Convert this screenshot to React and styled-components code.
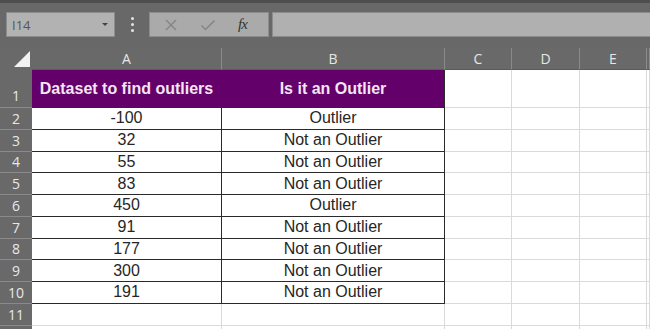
import React from 'react';
import styled, { createGlobalStyle } from 'styled-components';

const GlobalStyle = createGlobalStyle`
	html, body {
		margin: 0;
		padding: 0;
		background: #ffffff;
		overflow: hidden;
	}
`;

const Window = styled.div`
	width: 650px;
	height: 329px;
	overflow: hidden;
	background: #686868;
	display: flex;
	flex-direction: column;
	font-family: 'Liberation Sans', Arial, sans-serif;
`;

const TopStrip = styled.div`
	height: 3px;
	flex-shrink: 0;
	background: #4e4e4e;
`;

const FormulaBar = styled.div`
	height: 45px;
	flex-shrink: 0;
	box-sizing: border-box;
	padding: 9px 0 0 6px;
	display: flex;
	align-items: flex-start;
	background: #686868;
`;

const NameBox = styled.div`
	width: 109px;
	height: 25px;
	box-sizing: border-box;
	background: #b2b2b2;
	border: 1px solid #8c8c8c;
	display: flex;
	align-items: center;
	justify-content: space-between;
	padding: 0 6px 0 5px;
	font-family: 'Open Sans', sans-serif;
	font-size: 13px;
	color: #555;
`;

const Caret = styled.span`
	width: 0;
	height: 0;
	border-left: 3px solid transparent;
	border-right: 3px solid transparent;
	border-top: 3px solid #444;
`;

const Dots = styled.div`
	width: 34px;
	height: 25px;
	display: flex;
	flex-direction: column;
	align-items: center;
	justify-content: center;
	gap: 3px;
	& > span {
		width: 3px;
		height: 3px;
		border-radius: 50%;
		background: #e4e4e4;
	}
`;

const ButtonGroup = styled.div`
	width: 120px;
	height: 25px;
	box-sizing: border-box;
	background: #aaaaaa;
	border: 1px solid #8c8c8c;
	display: flex;
	align-items: center;
	padding-left: 14px;
	gap: 22px;
`;

const Fx = styled.span`
	font-family: 'Liberation Serif', 'DejaVu Serif', serif;
	font-style: italic;
	font-size: 15px;
	color: #333;
	letter-spacing: -1px;
`;

const FormulaInput = styled.div`
	flex: 1;
	margin-left: 3px;
	height: 25px;
	box-sizing: border-box;
	background: #b0b0b0;
	border: 1px solid #8c8c8c;
	border-right: none;
`;

const Sheet = styled.div`
	flex-shrink: 0;
	display: grid;
	grid-template-columns: 32px 190px 223px 67px 68px 67px 1fr;
	grid-template-rows: 22px 38px repeat(11, 21.75px);
	background: #ffffff;
`;

const ColHead = styled.div`
	background: #696969;
	color: #e6e6e6;
	font-family: 'Open Sans', sans-serif;
	font-size: 14px;
	display: flex;
	align-items: center;
	justify-content: center;
	box-sizing: border-box;
	border-right: 1px solid #8a8a8a;
	border-bottom: 1px solid #5a5a5a;
`;

const Corner = styled.div`
	background: #696969;
	display: flex;
	align-items: flex-end;
	justify-content: flex-end;
	padding: 0 2px 3px 0;
	box-sizing: border-box;
	& > span {
		width: 0;
		height: 0;
		border-left: 16px solid transparent;
		border-bottom: 16px solid #f2f2f2;
	}
`;

const RowHead = styled.div`
	background: #696969;
	color: #e8e8e8;
	font-family: 'Open Sans', sans-serif;
	font-size: 14px;
	display: flex;
	align-items: ${(p) => (p.tall ? 'flex-end' : 'center')};
	padding-bottom: ${(p) => (p.tall ? '2px' : '0')};
	justify-content: center;
	box-sizing: border-box;
	border-bottom: 1px solid #8a8a8a;
`;

const Cell = styled.div`
	box-sizing: border-box;
	display: flex;
	align-items: center;
	justify-content: center;
	font-size: 16px;
	color: #262626;
	white-space: nowrap;
	border-right: 1px solid ${(p) => (p.boxed ? '#2a2a2a' : '#dadada')};
	border-bottom: 1px solid ${(p) => (p.boxed ? '#2a2a2a' : '#dadada')};
	background: ${(p) => (p.head ? '#64006a' : '#ffffff')};
	${(p) => p.head && 'color: #f4e6f4; font-weight: bold;'}
`;

// F is only a sliver at the right edge, so its letter is off-screen
const columns = ['A', 'B', 'C', 'D', 'E', ''];

const data = [
	[-100, 'Outlier'],
	[32, 'Not an Outlier'],
	[55, 'Not an Outlier'],
	[83, 'Not an Outlier'],
	[450, 'Outlier'],
	[91, 'Not an Outlier'],
	[177, 'Not an Outlier'],
	[300, 'Not an Outlier'],
	[191, 'Not an Outlier'],
];

function Blanks({ row }) {
	return [0, 1, 2, 3].map((i) => <Cell key={`${row}-b${i}`} />);
}

export default function App() {
	return (
		<>
			<GlobalStyle />
			<Window>
				<TopStrip />
				<FormulaBar>
					<NameBox>
						<span>I14</span>
						<Caret />
					</NameBox>
					<Dots>
						<span />
						<span />
						<span />
					</Dots>
					<ButtonGroup>
						<svg width="14" height="14" viewBox="0 0 14 14">
							<path d="M2 2 L12 12 M12 2 L2 12" stroke="#858585" strokeWidth="1.4" />
						</svg>
						<svg width="16" height="14" viewBox="0 0 16 14">
							<path d="M1.5 7.5 L5.5 11.5 L14.5 2.5" stroke="#858585" strokeWidth="1.5" fill="none" />
						</svg>
						<Fx>fx</Fx>
					</ButtonGroup>
					<FormulaInput />
				</FormulaBar>
				<Sheet>
					<Corner>
						<span />
					</Corner>
					{columns.map((c, i) => (
						<ColHead key={`col${i}`}>{c}</ColHead>
					))}

					<RowHead tall>1</RowHead>
					<Cell head boxed>Dataset to find outliers</Cell>
					<Cell head boxed>Is it an Outlier</Cell>
					<Blanks row={1} />

					{data.map(([value, label], index) => (
						<React.Fragment key={`${value}${index}`}>
							<RowHead>{index + 2}</RowHead>
							<Cell boxed>{value}</Cell>
							<Cell boxed>{label}</Cell>
							<Blanks row={index + 2} />
						</React.Fragment>
					))}

					<RowHead>11</RowHead>
					<Cell />
					<Cell />
					<Blanks row={11} />

					{/* row 12 is cut by the window edge */}
					<RowHead />
					<Cell />
					<Cell />
					<Blanks row={12} />
				</Sheet>
			</Window>
		</>
	);
}
